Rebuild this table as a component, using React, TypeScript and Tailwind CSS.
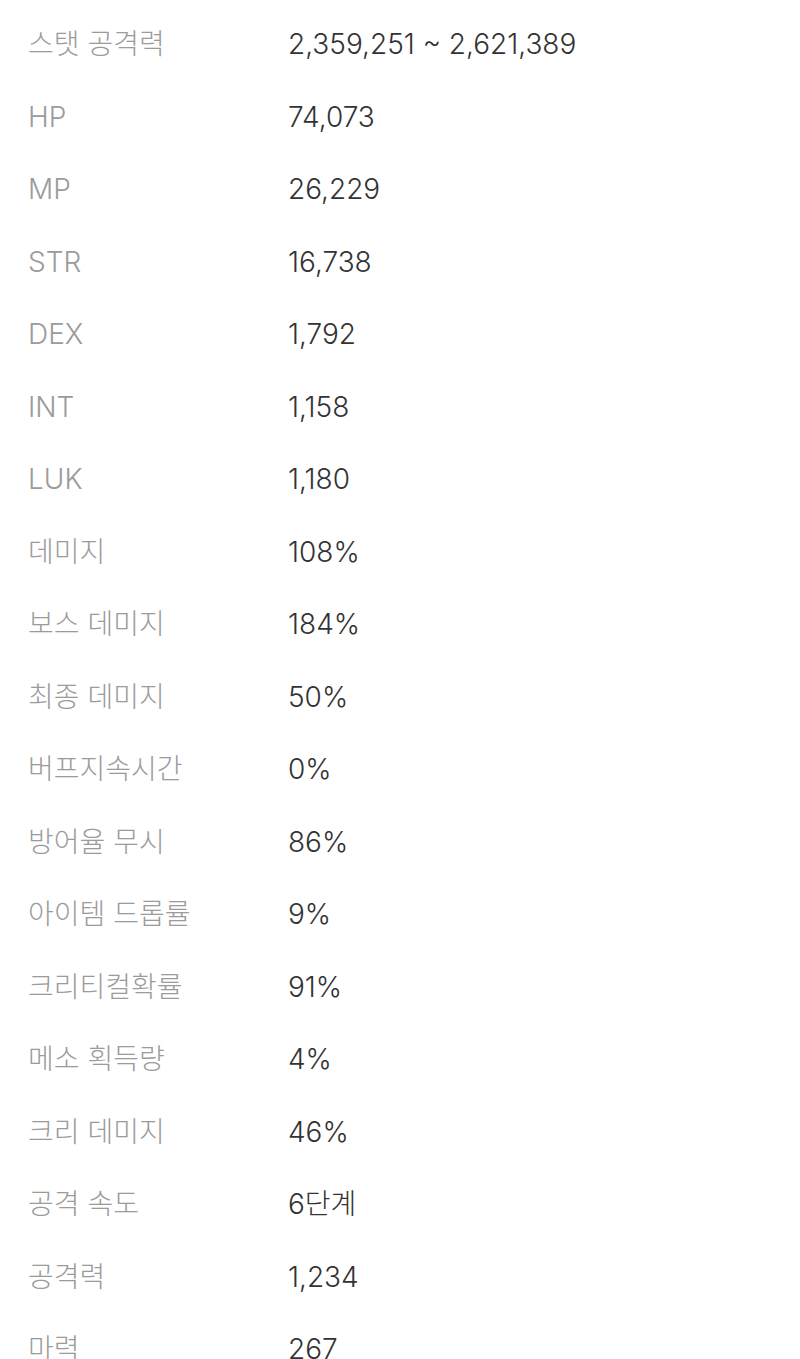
const rows: [string, string][] = [
  ['스탯 공격력', '2,359,251 ~ 2,621,389'],
  ['HP', '74,073'],
  ['MP', '26,229'],
  ['STR', '16,738'],
  ['DEX', '1,792'],
  ['INT', '1,158'],
  ['LUK', '1,180'],
  ['데미지', '108%'],
  ['보스 데미지', '184%'],
  ['최종 데미지', '50%'],
  ['버프지속시간', '0%'],
  ['방어율 무시', '86%'],
  ['아이템 드롭률', '9%'],
  ['크리티컬확률', '91%'],
  ['메소 획득량', '4%'],
  ['크리 데미지', '46%'],
  ['공격 속도', '6단계'],
  ['공격력', '1,234'],
  ['마력', '267'],
];

export default function App() {
  return (
    <div className="h-[1359px] overflow-hidden bg-white pt-[8px] font-['Inter','Noto_Sans_CJK_KR',sans-serif]">
      {rows.map(([label, value]) => (
        <div key={label} className="flex h-[72.5px] items-center text-[28px] leading-none">
          <div className="w-[288px] shrink-0 pl-[28px] font-light text-[#9b9b9b]">{label}</div>
          <div className="font-light text-[#333333]">{value}</div>
        </div>
      ))}
    </div>
  );
}
